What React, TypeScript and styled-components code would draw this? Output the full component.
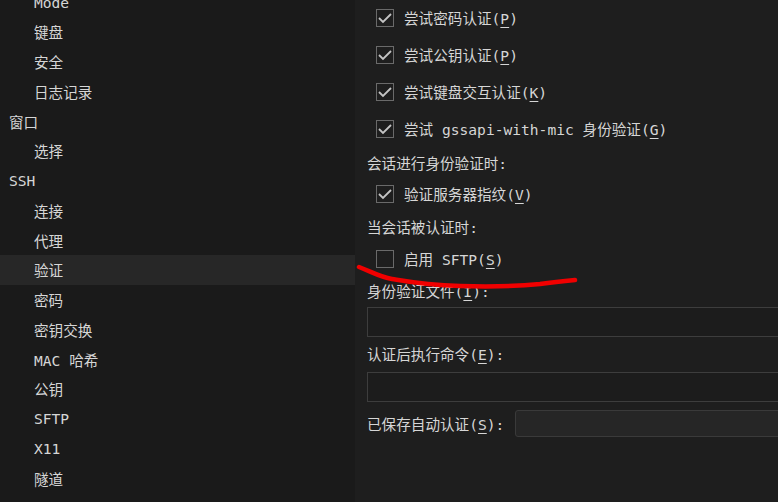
import React from 'react';
import styled, { createGlobalStyle } from 'styled-components';

const GlobalStyle = createGlobalStyle`
  html, body {
    margin: 0;
    padding: 0;
    background: #1e1e1e;
    overflow: hidden;
  }
  * {
    box-sizing: border-box;
  }
`;

const FONT = `"DejaVu Sans Mono", "Noto Sans CJK SC", monospace`;

const Window = styled.div`
  position: relative;
  display: flex;
  width: 778px;
  height: 502px;
  overflow: hidden;
  font-family: ${FONT};
  font-size: 14.6px;
  color: #d6d6d6;
  background: #1e1e1e;
`;

const Sidebar = styled.div`
  flex: 0 0 355px;
  display: flex;
  flex-direction: column;
  background: #1a1a1a;
  overflow: hidden;
`;

const TreeList = styled.div`
  display: flex;
  flex-direction: column;
  margin-top: -12.75px;
`;

const TreeItem = styled.div<{ $child?: boolean; $active?: boolean }>`
  flex: 0 0 29.75px;
  display: flex;
  align-items: center;
  padding-left: ${(p) => (p.$child ? '34px' : '9px')};
  background: ${(p) => (p.$active ? '#272727' : 'transparent')};
  white-space: nowrap;
`;

const Content = styled.div`
  flex: 1;
  display: flex;
  flex-direction: column;
  padding-left: 12px;
  overflow: hidden;
  background: #1e1e1e;
`;

const Stack = styled.div`
  display: flex;
  flex-direction: column;
  margin-top: -1px;
`;

const CheckRow = styled.label<{ $h: number }>`
  flex: 0 0 ${(p) => p.$h}px;
  display: flex;
  align-items: center;
  gap: 10px;
  padding-left: 9px;
  white-space: nowrap;
`;

const Box = styled.span`
  flex: 0 0 18px;
  width: 18px;
  height: 18px;
  border: 1px solid #6a6a6a;
  display: flex;
  align-items: center;
  justify-content: center;
`;

const SectionLabel = styled.div<{ $h: number }>`
  flex: 0 0 ${(p) => p.$h}px;
  display: flex;
  align-items: center;
  white-space: nowrap;
`;

const FieldLabel = styled.div<{ $top: number; $bottom: number }>`
  height: 20px;
  line-height: 20px;
  margin-top: ${(p) => p.$top}px;
  margin-bottom: ${(p) => p.$bottom}px;
  white-space: nowrap;
`;

const TextInput = styled.div`
  width: 440px;
  height: 30px;
  flex: 0 0 30px;
  border: 1px solid #3d3d3d;
  background: #1c1c1c;
`;

const SelectRow = styled.div`
  display: flex;
  align-items: center;
  gap: 11px;
  margin-top: 8px;
  white-space: nowrap;
`;

const Select = styled.div`
  flex: 0 0 300px;
  height: 27px;
  border: 1px solid #3a3a3a;
  border-radius: 3px;
  background: #262626;
`;

const Key = styled.u`
  text-decoration-thickness: 1px;
  text-underline-offset: 3px;
`;

const Annotation = styled.svg`
  position: absolute;
  left: 0;
  top: 0;
  pointer-events: none;
`;

const Check = ({ checked }: { checked?: boolean }) => (
  <Box>
    {checked && (
      <svg width="16" height="16" viewBox="0 0 16 16">
        <polyline points="2,8 6,12 14,4" fill="none" stroke="#c4c4c4" strokeWidth="1.8" />
      </svg>
    )}
  </Box>
);

const tree: { label: string; child?: boolean; active?: boolean }[] = [
  { label: 'Mode', child: true },
  { label: '键盘', child: true },
  { label: '安全', child: true },
  { label: '日志记录', child: true },
  { label: '窗口' },
  { label: '选择', child: true },
  { label: 'SSH' },
  { label: '连接', child: true },
  { label: '代理', child: true },
  { label: '验证', child: true, active: true },
  { label: '密码', child: true },
  { label: '密钥交换', child: true },
  { label: 'MAC 哈希', child: true },
  { label: '公钥', child: true },
  { label: 'SFTP', child: true },
  { label: 'X11', child: true },
  { label: '隧道', child: true },
];

const App = () => {
  return (
    <Window>
      <GlobalStyle />
      <Sidebar>
        <TreeList>
          {tree.map((t) => (
            <TreeItem key={t.label} $child={t.child} $active={t.active}>
              {t.label}
            </TreeItem>
          ))}
        </TreeList>
      </Sidebar>
      <Content>
        <Stack>
          <CheckRow $h={37}>
            <Check checked />
            <span>尝试密码认证(<Key>P</Key>)</span>
          </CheckRow>
          <CheckRow $h={37}>
            <Check checked />
            <span>尝试公钥认证(<Key>P</Key>)</span>
          </CheckRow>
          <CheckRow $h={37}>
            <Check checked />
            <span>尝试键盘交互认证(<Key>K</Key>)</span>
          </CheckRow>
          <CheckRow $h={37}>
            <Check checked />
            <span>尝试 gssapi-with-mic 身份验证(<Key>G</Key>)</span>
          </CheckRow>
          <SectionLabel $h={30}>会话进行身份验证时:</SectionLabel>
          <CheckRow $h={33}>
            <Check checked />
            <span>验证服务器指纹(<Key>V</Key>)</span>
          </CheckRow>
          <SectionLabel $h={33}>当会话被认证时:</SectionLabel>
          <CheckRow $h={31}>
            <Check />
            <span>启用 SFTP(<Key>S</Key>)</span>
          </CheckRow>
          <FieldLabel $top={8} $bottom={5}>身份验证文件(<Key>I</Key>):</FieldLabel>
          <TextInput />
          <FieldLabel $top={8} $bottom={7}>认证后执行命令(<Key>E</Key>):</FieldLabel>
          <TextInput />
          <SelectRow>
            <span>已保存自动认证(<Key>S</Key>):</span>
            <Select />
          </SelectRow>
        </Stack>
      </Content>
      <Annotation width="778" height="502" viewBox="0 0 778 502">
        <path
          d="M359 267 C 372 272, 380 277, 392 279 C 410 282, 425 285, 460 286 C 495 287, 520 286, 540 284 C 555 282, 565 281, 575 280"
          fill="none"
          stroke="#f00000"
          strokeWidth="4.5"
          strokeLinecap="round"
        />
      </Annotation>
    </Window>
  );
};

export default App;
